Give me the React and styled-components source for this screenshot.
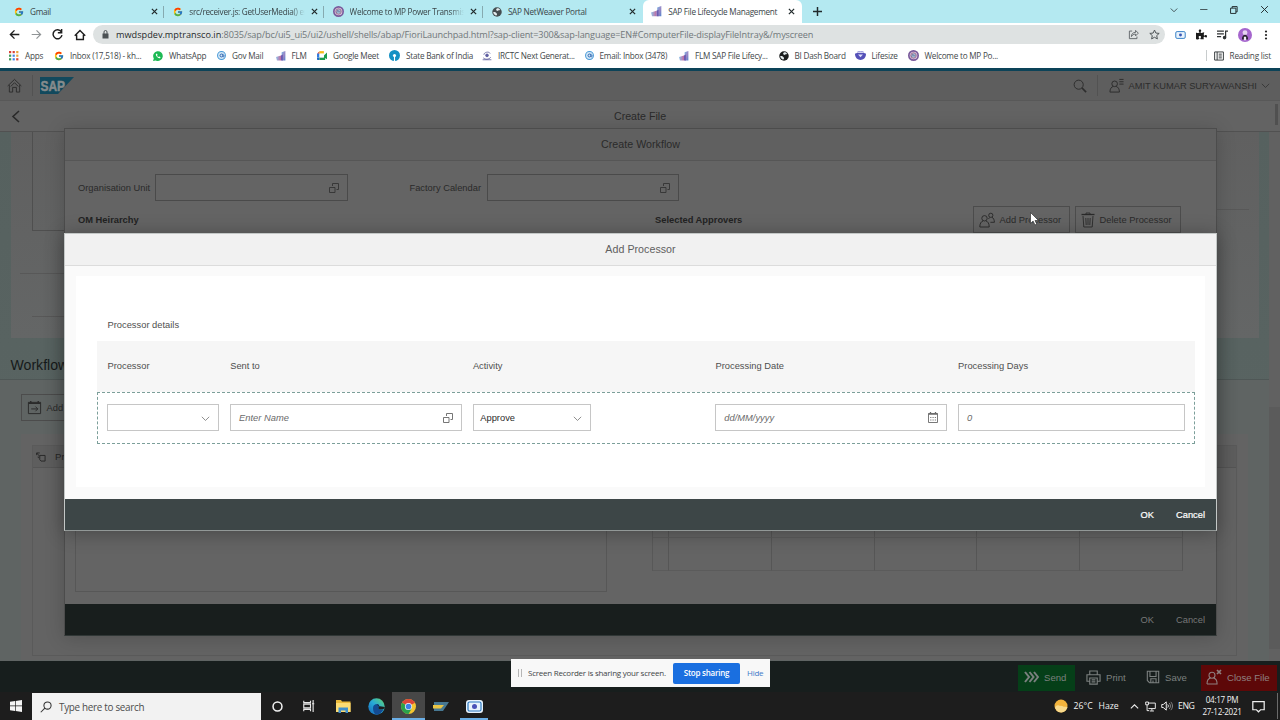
import React from 'react'
import styled, { createGlobalStyle, css } from 'styled-components'
import { FcGoogle } from 'react-icons/fc'
import { FaPuzzlePiece } from 'react-icons/fa'

const GlobalStyle = createGlobalStyle`
  * { box-sizing: border-box; }
  body { margin: 0; overflow: hidden; background: #1d1d1d; }
  svg { display: block; flex: none; }
`;

const ui = css`font-family: "Open Sans", "Noto Sans", sans-serif;`;
const arial = css`font-family: "Liberation Sans", Arial, sans-serif;`;

const Screen = styled.div`
  width: 1280px;
  height: 720px;
  display: flex;
  flex-direction: column;
  position: relative;
  overflow: hidden;
  ${arial}
`;

/* ---------- browser ---------- */

const TabStrip = styled.div`
  ${ui}
  height: 23px;
  flex: none;
  display: flex;
  padding-left: 6px;
  background: #b4e9f1;
`;

const Tab = styled.div`
  width: 159.3px;
  height: 23px;
  padding: 0 6px 0 8px;
  display: flex;
  align-items: center;
  gap: 6px;
  border-radius: 6px 6px 0 0;
  background: ${({ $active }) => ($active ? '#fff' : 'transparent')};
  border-right: 1px solid transparent;
  ${({ $divider }) => $divider && css`
    background: linear-gradient(#86aab0, #86aab0) right 6px / 1px 12px no-repeat;
  `}
`;

const TabText = styled.span`
  flex: 1;
  min-width: 0;
  white-space: nowrap;
  font-size: 8.2px;
  letter-spacing: -0.27px;
  color: #3a4548;
  mask-image: ${({ $fade }) => ($fade ? 'linear-gradient(90deg, #000 88%, transparent)' : 'none')};
`;

const NewTab = styled.div`
  width: 30px;
  display: flex;
  align-items: center;
  justify-content: center;
`;

const WindowButtons = styled.div`
  margin-left: auto;
  height: 19px;
  display: flex;
  align-items: center;
  gap: 21px;
  padding-right: 11px;
`;

const Toolbar = styled.div`
  ${ui}
  height: 22px;
  flex: none;
  display: flex;
  align-items: center;
  background: #fff;
  padding: 2px 9px 1px 9px;
`;

const NavIcons = styled.div`
  display: flex;
  gap: 10.5px;
  width: 84px;
`;

const Address = styled.div`
  width: 1072px;
  height: 19px;
  border-radius: 10px;
  background: #dee2e2;
  display: flex;
  align-items: center;
  padding: 0 5px 0 9px;
  gap: 7px;
`;

const Url = styled.div`
  flex: 1;
  white-space: nowrap;
  font-size: 9.15px;
  letter-spacing: -0.13px;
  color: #70777a;

  b { font-weight: 400; letter-spacing: 0.02px; color: #25292b; }
`;

const AddressIcons = styled.div`
  display: flex;
  gap: 10.5px;
`;

const Extensions = styled.div`
  display: flex;
  align-items: center;
  gap: 10px;
  margin-left: 10px;
`;

const Bookmarks = styled.div`
  ${ui}
  height: 23px;
  flex: none;
  display: flex;
  align-items: center;
  background: #fff;
  padding: 0 9px 2px 9px;
`;

const Bookmark = styled.div`
  width: ${({ $w }) => $w}px;
  flex: none;
  display: flex;
  align-items: center;
  gap: 6px;
  white-space: nowrap;
  font-size: 8.2px;
  letter-spacing: -0.24px;
  color: #43484a;
`;

const ReadingList = styled.div`
  margin-left: auto;
  height: 11px;
  padding-left: 7px;
  border-left: 1px solid #c8cccd;
  display: flex;
  align-items: center;
  gap: 6px;
  font-size: 8.2px;
  letter-spacing: -0.2px;
  color: #43484a;
`;

/* ---------- launchpad behind the dialogs ---------- */

const Launchpad = styled.div`
  flex: none;
  height: 624px;
  display: flex;
  flex-direction: column;
  background: #616161;
  border-top: 3px solid #0c4358;
  color: #272727;
`;

const ShellHeader = styled.div`
  height: 30px;
  flex: none;
  display: flex;
  align-items: center;
  background: #5e5e5e;
  border-bottom: 1px solid #585858;
`;

const ShellCell = styled.div`
  height: 21px;
  width: ${({ $w }) => ($w ? $w + 'px' : 'auto')};
  display: flex;
  align-items: center;
  gap: 4.5px;
  padding-left: ${({ $pad }) => $pad || 0}px;
  margin-left: ${({ $push }) => ($push ? 'auto' : 0)};
  border-right: ${({ $line }) => ($line ? '1px solid #525252' : 'none')};
  font-size: 9.33px;
  letter-spacing: -0.03px;
  color: #2d2d2d;
  white-space: nowrap;
`;

const PageTitle = styled.div`
  height: 31px;
  flex: none;
  display: grid;
  grid-template-columns: 60px 1fr 60px;
  align-items: center;
  text-align: center;
  background: #636363;
  border-bottom: 1px solid #515151;
  font-size: 10.67px;
  color: #2a2a2a;
`;

const PageBody = styled.div`
  flex: 1;
  display: flex;
  min-height: 0;
`;

const PageContent = styled.div`
  width: 1269px;
  display: flex;
  flex-direction: column;
  background: linear-gradient(#56615f, #5b6664);
`;

const FilePanel = styled.div`
  margin: 0 10px 0 11px;
  height: 206px;
  flex: none;
  display: flex;
  background: linear-gradient(#606060, #646666);
  padding: 0 10px 0 9px;
`;

const FileColumn = styled.div`
  flex: 1;
`;

const FileBox = styled.div`
  height: 99px;
  margin-left: 12px;
  width: 400px;
  border: 1px solid #4f4f4f;
  border-top: 0;
`;

const FileRule = styled.div`
  height: ${({ $h }) => $h || 43}px;
  margin-left: ${({ $indent }) => $indent || 0}px;
  border-bottom: 1px solid #585858;
`;

const SectionHead = styled.div`
  height: 42px;
  flex: none;
  padding: 17.5px 0 0 10.5px;
  font-size: 14.1px;
  line-height: 18px;
  color: #161a1a;
  border-bottom: 1px solid #4f5756;
`;

const WorkflowArea = styled.div`
  flex: 1;
  background: #5f6463;
  padding: 14px 21px 0 21px;
`;

const DimButton = styled.div`
  width: ${({ $w }) => $w}px;
  height: 27px;
  display: flex;
  align-items: center;
  gap: 4.5px;
  padding-left: 5px;
  border: 1px solid #4c4c4c;
  font-size: 9.33px;
  letter-spacing: 0.03px;
  color: #2a2a2a;
  white-space: nowrap;
`;

const WorkflowPanel = styled.div`
  margin-top: 13px;
  height: 226px;
  padding: 11px 11px 0 11px;
  background: #636363;
`;

const WorkflowTable = styled.div`
  height: 211px;
  border: 1px solid #5a5a5a;
`;

const WorkflowBar = styled.div`
  height: 22px;
  display: flex;
  align-items: center;
  gap: 9px;
  padding-left: 3px;
  background: #5e5e5e;
  border-bottom: 1px solid #555;
  font-size: 9.6px;
`;

const PageScroll = styled.div`
  width: 11px;
  background: #616161;
  padding-top: 275px;
`;

const PageThumb = styled.div`
  height: 242px;
  background: #5b5b5b;
`;

const PageFooter = styled.div`
  height: 31px;
  flex: none;
  display: flex;
  align-items: center;
  justify-content: flex-end;
  background: #171e1d;
  padding: 2px 3px 0 0;
`;

const FooterButton = styled.div`
  width: ${({ $w }) => $w}px;
  height: 26px;
  display: flex;
  align-items: center;
  gap: 5px;
  padding-left: ${({ $pad }) => $pad || 6}px;
  padding-bottom: 1px;
  margin-left: ${({ $gap }) => $gap || 0}px;
  background: ${({ $bg }) => $bg || 'transparent'};
  color: ${({ $fg }) => $fg || '#7b807f'};
  font-size: 9.6px;
  white-space: nowrap;
`;

const OuterScroll = styled.div`
  position: absolute;
  left: 1275px;
  top: 104px;
  width: 3px;
  height: 21px;
  background: #505050;
`;

/* ---------- dialogs ---------- */

const Dialog = styled.div`
  position: absolute;
  left: 64px;
  top: ${({ $top }) => $top}px;
  width: 1153px;
  height: ${({ $h }) => $h}px;
  display: flex;
  flex-direction: column;
  border: 1px solid ${({ $dim }) => ($dim ? '#4c4c4c' : '#c3c7c6')};
  border-bottom-color: ${({ $dim }) => ($dim ? '#303736' : '#929897')};
  background: ${({ $dim }) => ($dim ? '#646464' : '#fafafa')};
  box-shadow: 0 2px 18px rgba(0, 0, 0, ${({ $dim }) => ($dim ? 0.18 : 0.3)});
`;

const DialogHead = styled.div`
  height: 32px;
  flex: none;
  display: flex;
  align-items: center;
  justify-content: center;
  padding-bottom: 1px;
  font-size: 10.67px;
  letter-spacing: 0.03px;
  background: ${({ $dim }) => ($dim ? '#606060' : '#f1f1f1')};
  border-bottom: 1px solid ${({ $dim }) => ($dim ? '#565656' : '#dcdcdc')};
  color: ${({ $dim }) => ($dim ? '#2a2a2a' : '#5f5f5f')};
`;

const DialogFoot = styled.div`
  height: 31px;
  flex: none;
  margin-top: auto;
  display: flex;
  align-items: center;
  justify-content: flex-end;
  gap: 22px;
  padding-right: 11px;
  font-size: 9.33px;
  background: ${({ $dim }) => ($dim ? '#181e1d' : '#3d4647')};
  color: ${({ $dim }) => ($dim ? '#777' : '#fff')};
  -webkit-text-stroke: ${({ $dim }) => ($dim ? 0 : 0.2)}px;
`;

const FieldRow = styled.div`
  display: flex;
  align-items: center;
  height: 27px;
  margin-top: 13px;
  padding-left: 13px;
  font-size: 9.33px;
`;

const FieldLabel = styled.label`
  width: ${({ $w }) => $w}px;
  padding-right: 5.5px;
  text-align: right;
  white-space: nowrap;
  color: #2a2a2a;
`;

const Field = styled.div`
  width: ${({ $w }) => $w}px;
  height: 27px;
  display: flex;
  align-items: center;
  justify-content: space-between;
  padding: 0 8px;
  border: 1px solid ${({ $dim }) => ($dim ? '#4a4a4a' : '#c6c6c6')};
  background: ${({ $dim }) => ($dim ? 'transparent' : '#fff')};
  color: ${({ $filled }) => ($filled ? '#2c2c2c' : '#6a6a6a')};
  font-style: ${({ $filled }) => ($filled ? 'normal' : 'italic')};
  ${({ $choice }) => $choice && css`padding: 1px 8px 0 6.5px;`}
  font-size: 9.33px;
`;

const ListHeads = styled.div`
  display: flex;
  align-items: center;
  height: 27px;
  margin-top: 5px;
  padding-left: 13px;
  font-size: 9.33px;
  font-weight: 700;
  color: #222;
`;

const ListTitle = styled.div`
  width: ${({ $w }) => $w}px;
`;

const HeadButtons = styled.div`
  display: flex;
  gap: 5px;
  font-weight: 400;
`;

const Lists = styled.div`
  display: flex;
  gap: 45px;
  margin: 5px 0 0 10px;
  align-items: flex-start;
`;

const TreeBox = styled.div`
  width: 532px;
  height: 354px;
  border: 1px solid #575757;
`;

const ApproverGrid = styled.div`
  width: 531px;
  display: grid;
  grid-template-columns: 16px repeat(4, 102.8px) 1fr;
  grid-template-rows: 300px 33px;
  border-left: 1px solid #585858;

  div {
    border-right: 1px solid #565656;
    border-bottom: 1px solid #5b5b5b;
  }
`;

const FormCard = styled.div`
  margin: 10px 11px 0 11px;
  height: 211px;
  background: #fff;
  padding: 43px 10px 0 21px;
`;

const FormTitle = styled.div`
  padding-left: 10.5px;
  height: 22px;
  line-height: 12px;
  font-size: 9.33px;
  color: #4f4f4f;
`;

const FormLine = styled.div`
  height: ${({ $head }) => ($head ? 51 : 52)}px;
  display: grid;
  grid-template-columns: 122.7px 242.7px 242.6px 242.6px 1fr;
  align-items: center;
  padding-left: ${({ $head }) => ($head ? 10.5 : 9.4)}px;
  padding-bottom: 1px;
  background: ${({ $head }) => ($head ? '#f6f6f6' : '#fff')};
  border: ${({ $head }) => ($head ? 'none' : '1px dashed #7c9f9a')};
  font-size: 9.33px;
  color: #4f4f4f;
`;

/* ---------- screen share bar and taskbar ---------- */

const ShareBar = styled.div`
  ${ui}
  position: absolute;
  left: 511px;
  top: 659px;
  width: 259px;
  height: 28px;
  display: flex;
  align-items: center;
  background: #f8f8f8;
  font-size: 8px;
  letter-spacing: -0.24px;
  color: #3f4446;
  white-space: nowrap;
`;

const ShareText = styled.div`
  width: 145px;
  padding-bottom: 1px;
`;

const Grip = styled.div`
  width: 4px;
  height: 8px;
  margin: 0 6px 0 7px;
  border: 1px solid #b6b6b6;
  border-width: 0 1px;
`;

const StopButton = styled.div`
  width: 67px;
  height: 21px;
  margin-right: 7px;
  padding-bottom: 1px;
  border-radius: 2px;
  display: flex;
  align-items: center;
  justify-content: center;
  background: #1a6fe0;
  color: #fff;
  font-weight: 600;
  font-size: 8px;
`;

const HideLink = styled.span`
  padding-bottom: 1px;
  color: #3f78c9;
`;

const Taskbar = styled.div`
  ${ui}
  flex: 1;
  display: flex;
  align-items: center;
  background: #1d1d1d;
  color: #f2f2f2;
`;

const StartCell = styled.div`
  width: 32px;
  display: flex;
  justify-content: center;
`;

const SearchBox = styled.div`
  width: 229px;
  height: 27px;
  align-self: flex-end;
  display: flex;
  align-items: center;
  gap: 7px;
  padding-left: 8px;
  background: #f2f2f2;
  color: #4d4d4d;
  font-size: 9.9px;
  letter-spacing: -0.3px;
`;

const TaskCell = styled.div`
  width: ${({ $w }) => $w || 33}px;
  height: 28px;
  display: flex;
  align-items: center;
  justify-content: center;
  background: ${({ $active }) => ($active ? '#474747' : 'transparent')};
  border-bottom: 2px solid ${({ $open }) => ($open ? '#6aaee6' : 'transparent')};
  padding-top: 2px;
  margin-left: ${({ $gap }) => $gap || 0}px;
`;

const Tray = styled.div`
  margin-left: auto;
  height: 28px;
  display: flex;
  align-items: center;
  font-size: 8.7px;
  white-space: nowrap;
`;

const TrayCell = styled.div`
  width: ${({ $w }) => $w}px;
  flex: none;
  letter-spacing: ${({ $tight }) => ($tight ? -0.45 : 0)}px;
`;

const Clock = styled.div`
  width: 40px;
  margin-right: 10px;
  text-align: center;
  font-size: 8.1px;
  line-height: 12px;
  letter-spacing: -0.3px;
`;

const TrayEnd = styled.div`
  width: 1px;
  height: 26px;
  margin: 0 2px 0 12px;
  background: #6b6b6b;
`;

const Pointer = styled.svg`
  position: absolute;
  left: 1030px;
  top: 212px;
`;

/* ---------- icons ---------- */

const Line = ({ w = 12, h, box = '0 0 16 16', sw = 1.2, color = 'currentColor', children }) => (
  <svg width={w} height={h || w} viewBox={box} fill="none" stroke={color} strokeWidth={sw}>
    {children}
  </svg>
)

const CloseX = () => <Line w={7} sw={2.8} color="#20292b"><path d="M2 2l12 12M14 2L2 14" /></Line>

const MpIcon = ({ size = 11 }) => (
  <svg width={size} height={size} viewBox="0 0 16 16">
    <circle cx="8" cy="8" r="6.8" fill="#d9d3e8" stroke="#7a5a9b" strokeWidth="2.4" />
    <circle cx="8" cy="8" r="4" fill="#9cc0d3" stroke="#b0668a" strokeWidth="1.4" />
    <path d="M5 10l2-4 2 3 2-2" stroke="#6a6298" strokeWidth="1" fill="none" />
  </svg>
)

const GlobeIcon = ({ color = '#454d50', size = 10 }) => (
  <svg width={size} height={size} viewBox="0 0 16 16">
    <circle cx="8" cy="8" r="7.6" fill={color} />
    <path d="M8 2c2-.5 4 .5 5 2.500-1 1.500-3 .5-4 1.500s-2-1-2.500-2zM2 8c2-.5 4 0 4.500 1.300s2 1 1.500 2.700-1 1.500-2 1.500C3.500 12.500 2 10.500 2 8z" fill="#e4ecee" />
  </svg>
)

const FlmIcon = ({ size = 11 }) => (
  <svg width={size} height={size} viewBox="0 0 16 16">
    <defs>
      <linearGradient id="flm" x1="0" y1="0" x2="1" y2="1">
        <stop offset="0" stopColor="#7db6e6" />
        <stop offset=".55" stopColor="#9a86c4" />
        <stop offset="1" stopColor="#4f86cf" />
      </linearGradient>
      <linearGradient id="flmLow" x1="0" y1="0" x2="1" y2="0">
        <stop offset="0" stopColor="#8fc2ea" />
        <stop offset="1" stopColor="#c46a9e" />
      </linearGradient>
    </defs>
    <path d="M9 2l6-2v15H9z" fill="url(#flm)" />
    <path d="M0 9.500L8 7v8H1.500z" fill="url(#flmLow)" />
    <path d="M8 7l3-1.500V15H8z" fill="#6a5bb0" />
  </svg>
)

const AppsIcon = () => (
  <svg width="10" height="10" viewBox="0 0 10 10">
    {['#d94436', '#d94436', '#e9a33c', '#3f9b58', '#4384e8', '#e9a33c', '#3f9b58', '#4384e8', '#d94436'].map((c, i) => (
      <rect key={i} x={(i % 3) * 3.6} y={Math.floor(i / 3) * 3.6} width="2.2" height="2.2" fill={c} />
    ))}
  </svg>
)

const WhatsIcon = () => (
  <svg width="10" height="10" viewBox="0 0 16 16">
    <path d="M0 16l1.300-4A7.700 7.700 0 1 1 4.500 15z" fill="#1db954" />
    <path d="M5 4.500c-.9 1-.5 3 1.600 5s4 2.400 5 1.500l.2-1.300-2-1-1 1C7.500 9 6.700 8 6.500 7.400l.8-1L6.500 4.300z" fill="#fff" />
  </svg>
)

const MailAt = () => (
  <svg width="9" height="9" viewBox="0 0 16 16">
    <circle cx="8" cy="8" r="7" fill="#d4e8f7" stroke="#4a9bd8" strokeWidth="1.800" />
    <circle cx="8" cy="8" r="2.600" fill="none" stroke="#2b62ae" strokeWidth="1.700" />
    <path d="M10.700 5v4c0 2 2.500 1.500 2.500-1" fill="none" stroke="#2b62ae" strokeWidth="1.400" />
  </svg>
)

const MeetIcon = () => (
  <svg width="10" height="9" viewBox="0 0 16 14">
    <path d="M0 4l4-4v4z" fill="#e0443a" />
    <path d="M4 0h7v4H4z" fill="#f6ba17" />
    <path d="M0 4h4v6H0z" fill="#2f7de0" />
    <path d="M0 10h4v4H1a1 1 0 0 1-1-1z" fill="#1f66c4" />
    <path d="M4 10h7V7l5-5v11l-3-2v3H4z" fill="#1b9c4e" />
    <path d="M4 4h7v6H4z" fill="#fff" />
  </svg>
)

const SbiIcon = () => (
  <svg width="11" height="11" viewBox="0 0 16 16">
    <circle cx="8" cy="8" r="8" fill="#1591c4" />
    <circle cx="8" cy="8" r="2.300" fill="#fff" />
    <path d="M7.200 8h1.600v8H7.200z" fill="#fff" />
  </svg>
)

const IrctcIcon = () => (
  <Line w={10} sw={1.300} color="#5d5d9c">
    <path d="M3 6c0-4 8-6 10-2M2 11c3 3 9 3 12-1M1 14h14" />
    <circle cx="8" cy="7" r="2.200" fill="#5d5da6" />
  </Line>
)

const LifesizeIcon = () => (
  <svg width="11" height="9" viewBox="0 0 16 13">
    <path d="M0 4c3-2 13-2 16 0 0 6-4 9-8 9S0 10 0 4z" fill="#5450b8" />
    <path d="M3 2c3-2 7-2 10 0" fill="none" stroke="#9a9adb" strokeWidth="1.500" />
    <path d="M4.500 5h7L8 9z" fill="#dfe0f8" />
  </svg>
)

const Chevron = ({ w = 9, sw = 1.3, color }) => <Line w={w} sw={sw} color={color}><path d="M1.500 5l6.500 6.500L14.500 5" /></Line>

const ValueHelp = ({ color }) => (
  <Line w={10} h={10} box="0 0 10 10" sw={0.9} color={color}>
    <path d="M.5 4.500h5.500v5H.500zM3.500 3V.500h6v6H7.500" />
  </Line>
)

const Person = ({ badge, w = 15 }) => (
  <Line w={w} sw={1.050}>
    <circle cx="6" cy="6.200" r="3" />
    <path d="M1 15c0-3.500 1.500-5.500 3.500-6M7.600 9c2 .5 3.500 2.500 3.500 6H1" />
    {badge === 'list' && <path d="M11 1.500h4.500M11 4h4.500M11 6.500h4.500" />}
    {badge === 'x' && <path strokeWidth="1.700" d="M11 1l4 4M15 1l-4 4" />}
  </Line>
)

const People = () => (
  <Line w={16} sw={0.950}>
    <circle cx="5.500" cy="6.300" r="2.700" />
    <path d="M.8 15c0-3.500 1.400-5.500 3.200-6M7 9c2 .5 3.200 2.500 3.200 6H.8" />
    <circle cx="11.800" cy="3.300" r="2.100" />
    <path d="M9.500 7l1-1.500M13 5.300c1.500.7 2.400 2.500 2.400 5h-4" />
  </Line>
)

const Trash = () => (
  <Line w={14} h={16} box="0 0 14 16" sw={0.9}>
    <path d="M.5 2.500h13" strokeWidth="1.300" />
    <path d="M5 2.500V1h4v1.500M2 4l.8 11h8.400L12 4M4.800 6l.4 7M7 6v7M9.200 6l-.4 7" />
  </Line>
)

const SapLogo = () => (
  <svg width="34" height="17" viewBox="0 0 34 17">
    <path d="M0 0h34L18 17H0z" fill="#12495d" />
    <text x="0.500" y="13.600" fontFamily="Liberation Sans, Arial, sans-serif" fontWeight="700" fontSize="14.500" textLength="24.500" lengthAdjust="spacingAndGlyphs" fill="#858b8c" stroke="#858b8c" strokeWidth=".5">SAP</text>
  </svg>
)

const Printer = () => (
  <Line w={15} sw={1.200}>
    <path d="M4 5V1h8v4M4 12H1V5h14v7h-3M4 8.500h8V15H4zM6 10.500h4M6 12.700h4" />
  </Line>
)

const Floppy = () => (
  <Line w={14} sw={1.250}>
    <path d="M1.500 1.500h13v13H4l-2.500-2.500zM4.500 1.500v6h7v-6M5.500 14.500V10h6v4.500M8 12v2.500" />
  </Line>
)

const SendArrows = () => (
  <Line w={15} h={12} box="0 0 15 12" sw={2}>
    <path d="M1 1l4 5-4 5M5.500 1l4 5-4 5M10 1l4 5-4 5" />
  </Line>
)

const CalendarAdd = () => (
  <Line w={15} sw={1}>
    <path d="M1.500 2.500h13v12h-13zM4.500 9.500h7M9 7l2.500 2.500L9 12" />
    <path d="M1.500 3.500h13M4 1v2M12 1v2" strokeWidth="1.500" />
  </Line>
)

const Calendar = () => (
  <Line w={10} h={11} box="0 0 10 11" sw={0.9} color="#6a6a6a">
    <path d="M.5 1.500h9v9h-9z" />
    <path d="M.5 2h9M2.500 0v2M7.500 0v2" strokeWidth="1.300" />
    <path d="M2.200 5.500h6M2.200 8h6" strokeDasharray="1.200 1.100" />
  </Line>
)

const EdgeIcon = () => (
  <svg width="17" height="17" viewBox="0 0 17 17">
    <defs>
      <linearGradient id="edge" x1="0" y1="1" x2="1" y2="0">
        <stop offset="0" stopColor="#1764b8" />
        <stop offset=".5" stopColor="#27a9d8" />
        <stop offset="1" stopColor="#63d66b" />
      </linearGradient>
    </defs>
    <circle cx="8.500" cy="8.500" r="8.200" fill="url(#edge)" />
    <path d="M5 10c0-3 2-4 4-4 2 0 3 2 1.800 3.600C9.500 11.500 13 12.500 15.500 11c-1.500 4-4.500 5.700-7.500 5.700C6 15.500 5 13 5 10z" fill="#134b93" />
    <path d="M9 6.500c2 0 2.500 1.800 1.500 3.200-.7 1.600 2.500 2.600 5.500 1l.9-1.700-6.400-1z" fill="#1d1d1d" />
  </svg>
)

const ChromeIcon = () => (
  <svg width="15" height="15" viewBox="0 0 16 16">
    <circle cx="8" cy="8" r="8" fill="#f4c531" />
    <path d="M8 8L1.100 4A8 8 0 0 1 14.900 4z" fill="#dc4639" />
    <path d="M8 8L1.100 4A8 8 0 0 0 8 16l3.500-6z" fill="#2ba14b" />
    <circle cx="8" cy="8" r="3.800" fill="#f5f5f5" />
    <circle cx="8" cy="8" r="3" fill="#3f80e6" />
  </svg>
)

const FolderIcon = () => (
  <svg width="15" height="13" viewBox="0 0 15 13">
    <path d="M0 0h5l1 1.500h8.500V12H0z" fill="#e9b93b" />
    <path d="M0 3h14.500v9H0z" fill="#fbdc74" />
    <path d="M2.500 13V7.500h9.500V13H9.500v-2.500H5V13z" fill="#3f8fcc" />
  </svg>
)

const RecorderIcon = ({ w = 11, h = 8 }) => (
  <svg width={w} height={h} viewBox="0 0 16 12">
    <rect x=".9" y=".9" width="14.200" height="10.200" rx="2" fill="#e9f3fc" stroke="#3b83c8" strokeWidth="1.500" />
    <circle cx="8" cy="6" r="2.200" fill="#3a59b6" />
  </svg>
)

const tabs = [
  { text: 'Gmail', icon: <FcGoogle size={10} />, divider: true },
  { text: 'src/receiver.js: GetUserMedia() er', icon: <FcGoogle size={10} />, divider: true, fade: true },
  { text: 'Welcome to MP Power Transmiss', icon: <MpIcon />, divider: true, fade: true },
  { text: 'SAP NetWeaver Portal', icon: <GlobeIcon /> },
  { text: 'SAP File Lifecycle Management', icon: <FlmIcon />, active: true },
]

const bookmarks = [
  { text: 'Apps', icon: <AppsIcon />, w: 45 },
  { text: 'Inbox (17,518) - kh...', icon: <FcGoogle size={10} />, w: 99 },
  { text: 'WhatsApp', icon: <WhatsIcon />, w: 64 },
  { text: 'Gov Mail', icon: <MailAt />, w: 58.5 },
  { text: 'FLM', icon: <FlmIcon size={10} />, w: 41.5 },
  { text: 'Google Meet', icon: <MeetIcon />, w: 72 },
  { text: 'State Bank of India', icon: <SbiIcon />, w: 93 },
  { text: 'IRCTC Next Generat...', icon: <IrctcIcon />, w: 102.5 },
  { text: 'Email: Inbox (3478)', icon: <MailAt />, w: 94.5 },
  { text: 'FLM SAP File Lifecy...', icon: <FlmIcon size={10} />, w: 99.5 },
  { text: 'BI Dash Board', icon: <GlobeIcon color="#1b1d1e" />, w: 76 },
  { text: 'Lifesize', icon: <LifesizeIcon />, w: 53 },
  { text: 'Welcome to MP Po...', icon: <MpIcon />, w: 95 },
]

const Browser = () => (
  <>
    <TabStrip>
      {tabs.map((tab) => (
        <Tab key={tab.text} $active={tab.active} $divider={tab.divider}>
          {tab.icon}
          <TabText $fade={tab.fade}>{tab.text}</TabText>
          <CloseX />
        </Tab>
      ))}
      <NewTab><Line w={9} sw={2.600} color="#20292b"><path d="M8 0v16M0 8h16" /></Line></NewTab>
      <WindowButtons>
        <Chevron w={8} sw={1.800} color="#3c4a4d" />
        <Line w={9} sw={1.600} color="#3c4a4d"><path d="M2 8h13" /></Line>
        <Line w={10} sw={1.500} color="#20292b"><path d="M2.500 5h8.500v8.500H2.500zM5 5V2.500H13V11h-2" /></Line>
        <Line w={9} sw={1.700} color="#20292b"><path d="M2 2l12 12M14 2L2 14" /></Line>
      </WindowButtons>
    </TabStrip>
    <Toolbar>
      <NavIcons>
        <Line w={11} sw={2} color="#1f1f1f"><path d="M15 8H2M8 2L2 8l6 6" /></Line>
        <Line w={11} sw={1.700} color="#909496"><path d="M1 8h13M8 2l6 6-6 6" /></Line>
        <Line w={11} sw={2.100} color="#1f1f1f"><path d="M13.500 4A6.500 6.500 0 1 0 14.500 9M14 0v5.500H8.500" /></Line>
        <Line w={12} sw={1.900} color="#1f1f1f"><path d="M1 9l7-7 7 7M3.500 7.500V14h9V7.500" /></Line>
      </NavIcons>
      <Address>
        <svg width="7" height="9" viewBox="0 0 7 9"><path d="M.5 3.500h6V8.500h-6z" fill="#4b5154" /><path d="M2 4V2a1.500 1.500 0 0 1 3 0v2" fill="none" stroke="#4b5154" /></svg>
        <Url><b>mwdspdev.mptransco.in</b>:8035/sap/bc/ui5_ui5/ui2/ushell/shells/abap/FioriLaunchpad.html?sap-client=300&amp;sap-language=EN#ComputerFile-displayFileIntray&amp;/myscreen</Url>
        <AddressIcons>
          <Line w={11} sw={1.300} color="#5b6164"><path d="M6 3H2v11h11v-3M5 11c0-4 2-6 6-6V2l4 4-4 4V7.500C8 7.500 6.500 8.500 5 11z" /></Line>
          <Line w={11} sw={1.400} color="#4b5154"><path d="M8 1.500l2 4.400 4.800.5-3.600 3.200 1 4.800L8 12l-4.200 2.400 1-4.800L1.200 6.400 6 5.900z" /></Line>
        </AddressIcons>
      </Address>
      <Extensions>
        <RecorderIcon w={11} />
        <FaPuzzlePiece size={11} color="#1b1b1b" />
        <Line w={11} sw={1.800} color="#303335"><path d="M0 3h10M0 7h10M0 11h6M12.500 12V3H16" /><circle cx="11" cy="12.500" r="1.700" fill="#303335" /></Line>
        <svg width="14" height="14" viewBox="0 0 16 16">
          <circle cx="8" cy="8" r="8" fill="#a565cd" />
          <circle cx="8" cy="5.500" r="2.800" fill="#e5d3ef" />
          <path d="M4.500 13c0-7 7-7 7 0z" fill="#26202b" />
          <path d="M6.700 10h2.600v4H6.700z" fill="#f1ebf5" />
        </svg>
        <svg width="8" height="10" viewBox="0 0 8 10"><g fill="#222"><circle cx="4" cy="1.500" r="1.100" /><circle cx="4" cy="5" r="1.100" /><circle cx="4" cy="8.500" r="1.100" /></g></svg>
      </Extensions>
    </Toolbar>
    <Bookmarks>
      {bookmarks.map((item) => (
        <Bookmark key={item.text} $w={item.w}>
          {item.icon}
          {item.text}
        </Bookmark>
      ))}
      <ReadingList>
        <Line w={10} sw={1.600} color="#3c4143"><path d="M1 1.500h14v13H1zM5 1.500v13M7.500 5h5M7.500 8h5M7.500 11h5" /></Line>
        Reading list
      </ReadingList>
    </Bookmarks>
  </>
)

const Page = () => (
  <Launchpad>
    <ShellHeader>
      <ShellCell $w={33} $pad={7} $line>
        <Line w={15} sw={1}><path d="M.7 8.500L8 1.500l7.300 7M2.500 7.500V15H6v-5h4v5h3.500V7.500M4 9l4-4 4 4" /></Line>
      </ShellCell>
      <ShellCell $pad={7}><SapLogo /></ShellCell>
      <ShellCell $w={25} $push $line>
        <Line w={14} sw={1.100}><circle cx="6.500" cy="6.500" r="5.200" /><path d="M10.200 10.200L15 15" strokeWidth="1.800" /></Line>
      </ShellCell>
      <ShellCell $w={182} $pad={11}>
        <Person badge="list" w={15} />
        AMIT KUMAR SURYAWANSHI
        <Chevron w={9} />
      </ShellCell>
    </ShellHeader>
    <PageTitle>
      <Line w={32} h={13} box="0 0 32 13" sw={1.600}><path d="M19 1l-6 5.500 6 5.500" /></Line>
      <span>Create File</span>
    </PageTitle>
    <PageBody>
      <PageContent>
        <FilePanel>
          <FileColumn>
            <FileBox />
            <FileRule />
            <FileRule $indent={12} />
          </FileColumn>
          <FileColumn>
            <FileRule $h={78} />
          </FileColumn>
        </FilePanel>
        <SectionHead>Workflow</SectionHead>
        <WorkflowArea>
          <DimButton $w={120}><CalendarAdd />Add</DimButton>
          <WorkflowPanel>
            <WorkflowTable>
              <WorkflowBar>
                <Line w={10} sw={1.500}><path d="M6 5.500h8.500v9H8L6 12.500zM1 1.500l4.500 5M1 5V1.500h5M3.500 7V9H5" /></Line>
                Processor
              </WorkflowBar>
            </WorkflowTable>
          </WorkflowPanel>
        </WorkflowArea>
      </PageContent>
      <PageScroll><PageThumb /></PageScroll>
    </PageBody>
    <PageFooter>
      <FooterButton $w={57} $bg="#053f18"><SendArrows />Send</FooterButton>
      <FooterButton $w={56} $gap={5}><Printer />Print</FooterButton>
      <FooterButton $w={57} $gap={4}><Floppy />Save</FooterButton>
      <FooterButton $w={76} $gap={4} $pad={5} $bg="#5d0808" $fg="#8f8080"><Person badge="x" w={16} />Close File</FooterButton>
    </PageFooter>
  </Launchpad>
)

const WorkflowDialog = () => (
  <Dialog $top={128} $h={508} $dim>
    <DialogHead $dim>Create Workflow</DialogHead>
    <FieldRow>
      <FieldLabel $w={77}>Organisation Unit</FieldLabel>
      <Field $w={193} $dim><span /><ValueHelp color="#333" /></Field>
      <FieldLabel $w={138.500}>Factory Calendar</FieldLabel>
      <Field $w={192} $dim><span /><ValueHelp color="#333" /></Field>
    </FieldRow>
    <ListHeads>
      <ListTitle $w={577}>OM Heirarchy</ListTitle>
      <ListTitle $w={318}>Selected Approvers</ListTitle>
      <HeadButtons>
        <DimButton $w={97}><People />Add Processor</DimButton>
        <DimButton $w={106}><Trash />Delete Processor</DimButton>
      </HeadButtons>
    </ListHeads>
    <Lists>
      <TreeBox />
      <ApproverGrid>
        {Array.from({ length: 12 }, (_, i) => <div key={i} />)}
      </ApproverGrid>
    </Lists>
    <DialogFoot $dim><span>OK</span><span>Cancel</span></DialogFoot>
  </Dialog>
)

const ProcessorDialog = () => (
  <Dialog $top={233} $h={298}>
    <DialogHead>Add Processor</DialogHead>
    <FormCard>
      <FormTitle>Processor details</FormTitle>
      <FormLine $head>
        <span>Processor</span>
        <span>Sent to</span>
        <span>Activity</span>
        <span>Processing Date</span>
        <span>Processing Days</span>
      </FormLine>
      <FormLine>
        <Field $w={112} $choice><span /><Chevron color="#666" /></Field>
        <Field $w={232}>Enter Name<ValueHelp color="#666" /></Field>
        <Field $w={118} $filled $choice>Approve<Chevron color="#666" /></Field>
        <Field $w={232}>dd/MM/yyyy<Calendar /></Field>
        <Field $w={227}>0</Field>
      </FormLine>
    </FormCard>
    <DialogFoot><span>OK</span><span>Cancel</span></DialogFoot>
  </Dialog>
)

const WindowsTaskbar = () => (
  <Taskbar>
    <StartCell>
      <svg width="12" height="12" viewBox="0 0 12 12"><path d="M0 1.700l5-.7v4.600H0zM5.700.9L12 0v5.600H5.700zM0 6.300h5V11l-5-.7zM5.700 6.300H12V12l-6.300-.9z" fill="#f4f4f4" /></svg>
    </StartCell>
    <SearchBox>
      <Line w={12} sw={1.400} color="#333"><circle cx="10" cy="6" r="4.800" /><path d="M6.500 9.500L1 15" /></Line>
      Type here to search
    </SearchBox>
    <TaskCell $w={32}><Line w={11} sw={2.200} color="#f2f2f2"><circle cx="8" cy="8" r="6.500" /></Line></TaskCell>
    <TaskCell $w={32}><Line w={12} sw={1.500} color="#e8e8e8"><path d="M1 1v2.500h9V1M1 15v-2.500h9V15M1 5.500h9v5H1zM13.500 0v16M12 5h3" /></Line></TaskCell>
    <TaskCell $w={36}><FolderIcon /></TaskCell>
    <TaskCell $w={30}><EdgeIcon /></TaskCell>
    <TaskCell $w={33} $gap={1} $active $open><ChromeIcon /></TaskCell>
    <TaskCell $w={32}>
      <svg width="16" height="9" viewBox="0 0 16 9"><path d="M1 0h15l-6 9H1z" fill="#477892" /><path d="M0 3h11l-3 3.500H0z" fill="#eac545" /></svg>
    </TaskCell>
    <TaskCell $w={28} $gap={3} $open>
      <svg width="17" height="13" viewBox="0 0 17 13"><rect width="17" height="13" rx="3" fill="#e8f3fd" /><rect x="2" y="2" width="13" height="9" rx="1.500" fill="none" stroke="#2b79c2" strokeWidth="1.200" /><circle cx="8.500" cy="6.500" r="2.500" fill="#4a52b8" /></svg>
    </TaskCell>
    <Tray>
      <TrayCell $w={20}>
        <svg width="14" height="14" viewBox="0 0 14 14"><circle cx="7" cy="7" r="6.500" fill="#f2b33c" /><path d="M1 9a3 3 0 0 1 5-2c2-1 3 1 5 .8L13.500 8A6.500 6.500 0 0 1 3 12z" fill="#f8d98b" /></svg>
      </TrayCell>
      <TrayCell $w={25}>26°C</TrayCell>
      <TrayCell $w={31.5}>Haze</TrayCell>
      <TrayCell $w={15}><Line w={9} sw={1.800} color="#f0f0f0"><path d="M1.500 11.500L8 5l6.500 6.500" /></Line></TrayCell>
      <TrayCell $w={16}><Line w={11} sw={1.400} color="#f0f0f0"><path d="M5 3h10v8H5M10 11v3M7 14.500h6M1 1.500h4v4H1zM3 5.500V14h3" /></Line></TrayCell>
      <TrayCell $w={17}>
        <Line w={12} sw={1.300} color="#f0f0f0">
          <path d="M1 6v4h2l4 3.500v-11L3 6zM9 6c1 1 1 3 0 4" />
          <path d="M11 4c2 2 2 6 0 8M13 2.500c3 3 3 8 0 11" stroke="#8c8c8c" />
        </Line>
      </TrayCell>
      <TrayCell $w={24} $tight>ENG</TrayCell>
      <Clock>04:17 PM<br />27-12-2021</Clock>
      <Line w={13} sw={1.500} color="#f0f0f0"><path d="M1 2h14v10h-4.500L8 14.500 5.500 12H1z" /></Line>
      <TrayEnd />
    </Tray>
  </Taskbar>
)

const App = () => {
  return (
    <>
      <GlobalStyle />
      <Screen>
        <Browser />
        <Page />
        <WindowsTaskbar />
        <OuterScroll />
        <WorkflowDialog />
        <ProcessorDialog />
        <Pointer width="9" height="14" viewBox="0 0 9 14">
          <path d="M.5.5v11l2.600-2.400L5 13l1.800-.9L5 8.500h3.500z" fill="#fff" stroke="#333" strokeWidth=".7" />
        </Pointer>
        <ShareBar>
          <Grip />
          <ShareText>Screen Recorder is sharing your screen.</ShareText>
          <StopButton>Stop sharing</StopButton>
          <HideLink>Hide</HideLink>
        </ShareBar>
      </Screen>
    </>
  )
}

export default App
